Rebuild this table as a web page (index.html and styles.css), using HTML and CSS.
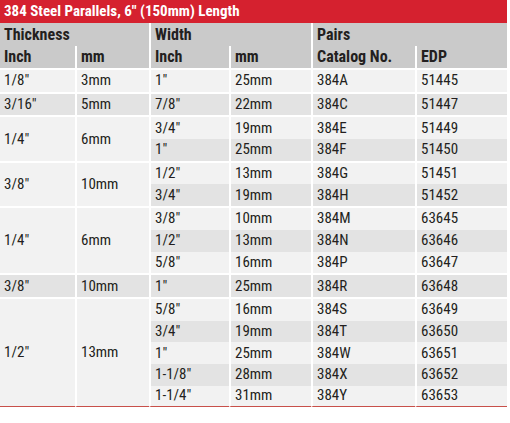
FILE: index.html
```html
<!DOCTYPE html>
<html>
<head>
<meta charset="utf-8">
<link rel="stylesheet" href="styles.css">
</head>
<body>
<div class="sheet">
  <div class="title">384 Steel Parallels, 6" (150mm) Length</div>
  <table class="grid">
    <colgroup>
      <col class="w1"><col class="w2"><col class="w3"><col class="w4"><col class="w5"><col class="w6">
    </colgroup>
    <thead>
      <tr class="h1">
        <th colspan="2" class="c1">Thickness</th>
        <th colspan="2">Width</th>
        <th colspan="2">Pairs</th>
      </tr>
      <tr class="h2">
        <th class="c1">Inch</th><th>mm</th><th>Inch</th><th>mm</th><th>Catalog No.</th><th>EDP</th>
      </tr>
    </thead>
    <tbody>
      <tr class="g lt"><td class="c1">1/8"</td><td>3mm</td><td>1"</td><td>25mm</td><td>384A</td><td>51445</td></tr>
      <tr class="g dk"><td class="c1">3/16"</td><td>5mm</td><td>7/8"</td><td>22mm</td><td>384C</td><td>51447</td></tr>
      <tr class="g lt"><td class="c1" rowspan="2">1/4"</td><td rowspan="2">6mm</td><td>3/4"</td><td>19mm</td><td>384E</td><td>51449</td></tr>
      <tr class="r dk"><td>1"</td><td>25mm</td><td>384F</td><td>51450</td></tr>
      <tr class="g lt"><td class="c1" rowspan="2">3/8"</td><td rowspan="2">10mm</td><td>1/2"</td><td>13mm</td><td>384G</td><td>51451</td></tr>
      <tr class="r dk"><td>3/4"</td><td>19mm</td><td>384H</td><td>51452</td></tr>
      <tr class="g lt"><td class="c1" rowspan="3">1/4"</td><td rowspan="3">6mm</td><td>3/8"</td><td>10mm</td><td>384M</td><td>63645</td></tr>
      <tr class="r dk"><td>1/2"</td><td>13mm</td><td>384N</td><td>63646</td></tr>
      <tr class="r lt"><td>5/8"</td><td>16mm</td><td>384P</td><td>63647</td></tr>
      <tr class="g dk"><td class="c1">3/8"</td><td>10mm</td><td>1"</td><td>25mm</td><td>384R</td><td>63648</td></tr>
      <tr class="g lt"><td class="c1 end" rowspan="5">1/2"</td><td class="end" rowspan="5">13mm</td><td>5/8"</td><td>16mm</td><td>384S</td><td>63649</td></tr>
      <tr class="r dk"><td>3/4"</td><td>19mm</td><td>384T</td><td>63650</td></tr>
      <tr class="r lt"><td>1"</td><td>25mm</td><td>384W</td><td>63651</td></tr>
      <tr class="r dk"><td>1-1/8"</td><td>28mm</td><td>384X</td><td>63652</td></tr>
      <tr class="r lt last"><td>1-1/4"</td><td>31mm</td><td>384Y</td><td>63653</td></tr>
    </tbody>
  </table>
</div>
</body>
</html>
```
FILE: styles.css
```css
body {
  margin: 0;
  background: #ffffff;
}

.sheet {
  width: 507px;
  font-family: "Roboto Condensed", "Open Sans Condensed", "Liberation Sans", sans-serif;
  color: #231f20;
}

.title {
  height: 23px;
  line-height: 23px;
  padding-left: 4px;
  background: #d5212f;
  color: #ffffff;
  font-weight: bold;
  font-size: 15px;
}

.grid {
  width: 507px;
  table-layout: fixed;
  border-collapse: separate;
  border-spacing: 0;
}

.w1 { width: 75px; }
.w2 { width: 74px; }
.w3 { width: 80px; }
.w4 { width: 82px; }
.w5 { width: 104px; }
.w6 { width: 92px; }

.grid th,
.grid td {
  box-sizing: border-box;
  padding: 0 0 0 4px;
  text-align: left;
  vertical-align: middle;
  border-left: 2px solid #ffffff;
  white-space: nowrap;
}

.grid th.c1,
.grid td.c1 {
  border-left: 0;
}

.grid th {
  background: #cacaca;
  font-weight: bold;
  font-size: 16px;
  line-height: 18px;
}

.h1 { height: 23px; }
.h2 { height: 22px; }

.grid td {
  font-size: 15px;
  line-height: 17px;
}

.r { height: 21.7px; }
.g { height: 23.7px; }

.g td {
  border-top: 2px solid #ffffff;
}

.lt td { background: #f2f2f2; }
.dk td { background: #e3e3e3; }

.last td,
.grid td.end {
  border-bottom: 1px solid #c8504a;
}
```
